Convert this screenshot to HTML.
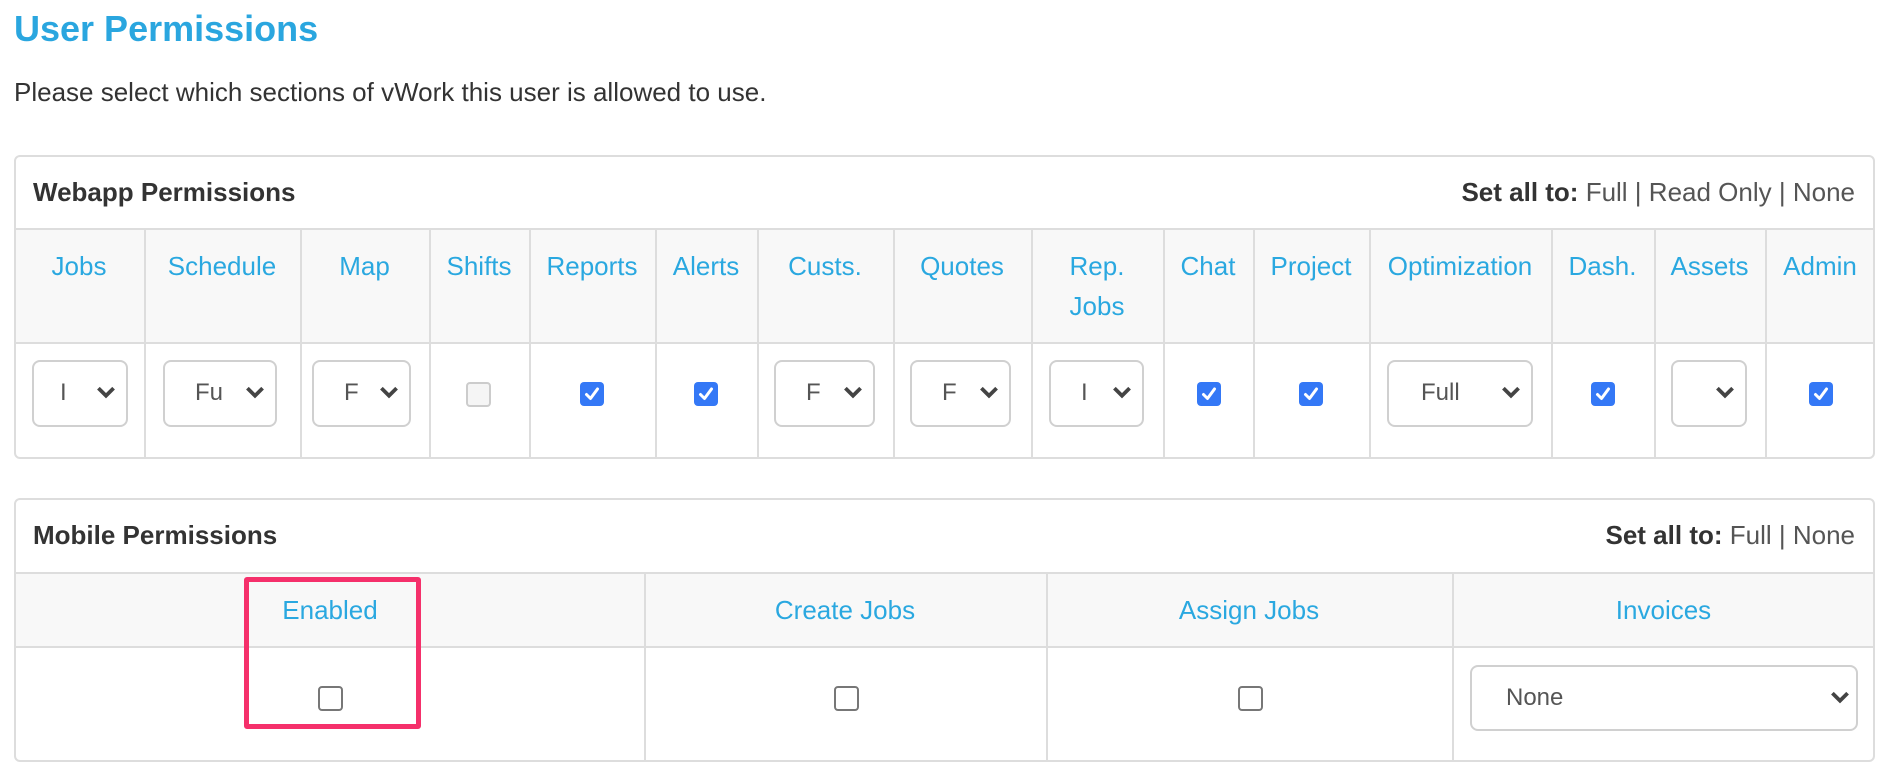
<!DOCTYPE html>
<html><head><meta charset="utf-8"><style>
*{box-sizing:border-box;margin:0;padding:0}
body{width:1888px;height:778px;background:#fff;font-family:"Liberation Sans",Arial,sans-serif;position:relative;overflow:hidden;color:#333}
.a{position:absolute}
.panel{position:absolute;border:2px solid #ddd;border-radius:6px;background:#fff}
.hl{position:absolute;height:2px;background:#ddd}
.vl{position:absolute;width:2px;background:#ddd}
.gray{position:absolute;background:#f8f8f8}
.th{position:absolute;text-align:center;color:#2aa8e0;font-size:26px;line-height:40px}
.sel{position:absolute;border:2px solid #d0d0d0;border-radius:8px;background:#fff;overflow:hidden;font-size:24px;color:#555;line-height:62px}
.sel svg{position:absolute;right:10px;top:24px}
.cb{position:absolute;width:24px;height:24px;border-radius:4px;background:#3478f6}
.cb svg{position:absolute;left:3px;top:3px}
.ub{position:absolute;width:25px;height:25px;border:2px solid #777;border-radius:4px;background:#fff}
</style></head><body>
<div class="a" style="left:14px;top:8px;font-size:36px;font-weight:bold;color:#2aa6df">User Permissions</div>
<div class="a" style="left:14px;top:77px;font-size:26px;color:#333">Please select which sections of vWork this user is allowed to use.</div>

<!-- Webapp panel -->
<div class="panel" style="left:14px;top:155px;width:1861px;height:304px"></div>
<div class="gray" style="left:16px;top:230px;width:1857px;height:113px"></div>
<div class="hl" style="left:14px;top:228px;width:1861px"></div>
<div class="hl" style="left:14px;top:342px;width:1861px"></div>
<div class="a" style="left:33px;top:177px;font-size:26px;font-weight:bold;color:#333">Webapp Permissions</div>
<div class="a" style="right:33px;top:177px;font-size:26px;color:#555"><b style="color:#333">Set all to:</b> Full | Read Only | None</div>
<div class="vl" style="left:144px;top:228px;height:230px"></div>
<div class="vl" style="left:300px;top:228px;height:230px"></div>
<div class="vl" style="left:429px;top:228px;height:230px"></div>
<div class="vl" style="left:529px;top:228px;height:230px"></div>
<div class="vl" style="left:655px;top:228px;height:230px"></div>
<div class="vl" style="left:757px;top:228px;height:230px"></div>
<div class="vl" style="left:893px;top:228px;height:230px"></div>
<div class="vl" style="left:1031px;top:228px;height:230px"></div>
<div class="vl" style="left:1163px;top:228px;height:230px"></div>
<div class="vl" style="left:1253px;top:228px;height:230px"></div>
<div class="vl" style="left:1369px;top:228px;height:230px"></div>
<div class="vl" style="left:1551px;top:228px;height:230px"></div>
<div class="vl" style="left:1654px;top:228px;height:230px"></div>
<div class="vl" style="left:1765px;top:228px;height:230px"></div>

<div class="th" style="left:14px;width:130px;top:246px">Jobs</div>
<div class="th" style="left:144px;width:156px;top:246px">Schedule</div>
<div class="th" style="left:300px;width:129px;top:246px">Map</div>
<div class="th" style="left:429px;width:100px;top:246px">Shifts</div>
<div class="th" style="left:529px;width:126px;top:246px">Reports</div>
<div class="th" style="left:655px;width:102px;top:246px">Alerts</div>
<div class="th" style="left:757px;width:136px;top:246px">Custs.</div>
<div class="th" style="left:893px;width:138px;top:246px">Quotes</div>
<div class="th" style="left:1031px;width:132px;top:246px">Rep.<br>Jobs</div>
<div class="th" style="left:1163px;width:90px;top:246px">Chat</div>
<div class="th" style="left:1253px;width:116px;top:246px">Project</div>
<div class="th" style="left:1369px;width:182px;top:246px">Optimization</div>
<div class="th" style="left:1551px;width:103px;top:246px">Dash.</div>
<div class="th" style="left:1654px;width:111px;top:246px">Assets</div>
<div class="th" style="left:1765px;width:110px;top:246px">Admin</div>

<svg width="0" height="0" style="position:absolute"><defs>
<symbol id="ch" viewBox="0 0 18 12"><path d="M2 2 L9 9 L16 2" fill="none" stroke="#444" stroke-width="3.5"/></symbol>
<symbol id="ck" viewBox="0 0 18 18"><path d="M3.5 9.5 L7.5 13.5 L14.5 4" fill="none" stroke="#fff" stroke-width="3" stroke-linecap="round" stroke-linejoin="round"/></symbol>
</defs></svg>

<div class="sel" style="left:32px;top:360px;width:96px;height:67px"><span class="a" style="left:26px">I</span><svg width="20" height="13"><use href="#ch"/></svg></div>
<div class="sel" style="left:163px;top:360px;width:114px;height:67px"><span class="a" style="left:30px">Fu</span><svg width="20" height="13"><use href="#ch"/></svg></div>
<div class="sel" style="left:312px;top:360px;width:99px;height:67px"><span class="a" style="left:30px">F</span><svg width="20" height="13"><use href="#ch"/></svg></div>
<div class="a" style="left:466px;top:382px;width:25px;height:25px;border:2px solid #ccc;border-radius:4px;background:#f5f5f5"></div>
<div class="cb" style="left:580px;top:382px"><svg width="18" height="18"><use href="#ck"/></svg></div>
<div class="cb" style="left:694px;top:382px"><svg width="18" height="18"><use href="#ck"/></svg></div>
<div class="sel" style="left:774px;top:360px;width:101px;height:67px"><span class="a" style="left:30px">F</span><svg width="20" height="13"><use href="#ch"/></svg></div>
<div class="sel" style="left:910px;top:360px;width:101px;height:67px"><span class="a" style="left:30px">F</span><svg width="20" height="13"><use href="#ch"/></svg></div>
<div class="sel" style="left:1049px;top:360px;width:95px;height:67px"><span class="a" style="left:30px">I</span><svg width="20" height="13"><use href="#ch"/></svg></div>
<div class="cb" style="left:1197px;top:382px"><svg width="18" height="18"><use href="#ck"/></svg></div>
<div class="cb" style="left:1299px;top:382px"><svg width="18" height="18"><use href="#ck"/></svg></div>
<div class="sel" style="left:1387px;top:360px;width:146px;height:67px"><span class="a" style="left:32px">Full</span><svg width="20" height="13"><use href="#ch"/></svg></div>
<div class="cb" style="left:1591px;top:382px"><svg width="18" height="18"><use href="#ck"/></svg></div>
<div class="sel" style="left:1671px;top:360px;width:76px;height:67px"><svg width="20" height="13"><use href="#ch"/></svg></div>
<div class="cb" style="left:1809px;top:382px"><svg width="18" height="18"><use href="#ck"/></svg></div>

<!-- Mobile panel -->
<div class="panel" style="left:14px;top:498px;width:1861px;height:264px"></div>
<div class="gray" style="left:16px;top:574px;width:1857px;height:73px"></div>
<div class="hl" style="left:14px;top:572px;width:1861px"></div>
<div class="hl" style="left:14px;top:646px;width:1861px"></div>
<div class="a" style="left:33px;top:520px;font-size:26px;font-weight:bold;color:#333">Mobile Permissions</div>
<div class="a" style="right:33px;top:520px;font-size:26px;color:#555"><b style="color:#333">Set all to:</b> Full | None</div>
<div class="vl" style="left:644px;top:572px;height:188px"></div>
<div class="vl" style="left:1046px;top:572px;height:188px"></div>
<div class="vl" style="left:1452px;top:572px;height:188px"></div>
<div class="th" style="left:14px;width:632px;top:590px">Enabled</div>
<div class="th" style="left:644px;width:402px;top:590px">Create Jobs</div>
<div class="th" style="left:1046px;width:406px;top:590px">Assign Jobs</div>
<div class="th" style="left:1452px;width:423px;top:590px">Invoices</div>
<div class="ub" style="left:318px;top:686px"></div>
<div class="ub" style="left:834px;top:686px"></div>
<div class="ub" style="left:1238px;top:686px"></div>
<div class="sel" style="left:1470px;top:665px;width:388px;height:66px"><span class="a" style="left:34px">None</span><svg width="20" height="13" style="right:6px"><use href="#ch"/></svg></div>
<div class="a" style="left:244px;top:577px;width:177px;height:152px;border:5px solid #f5306b;border-radius:3px"></div>
</body></html>
